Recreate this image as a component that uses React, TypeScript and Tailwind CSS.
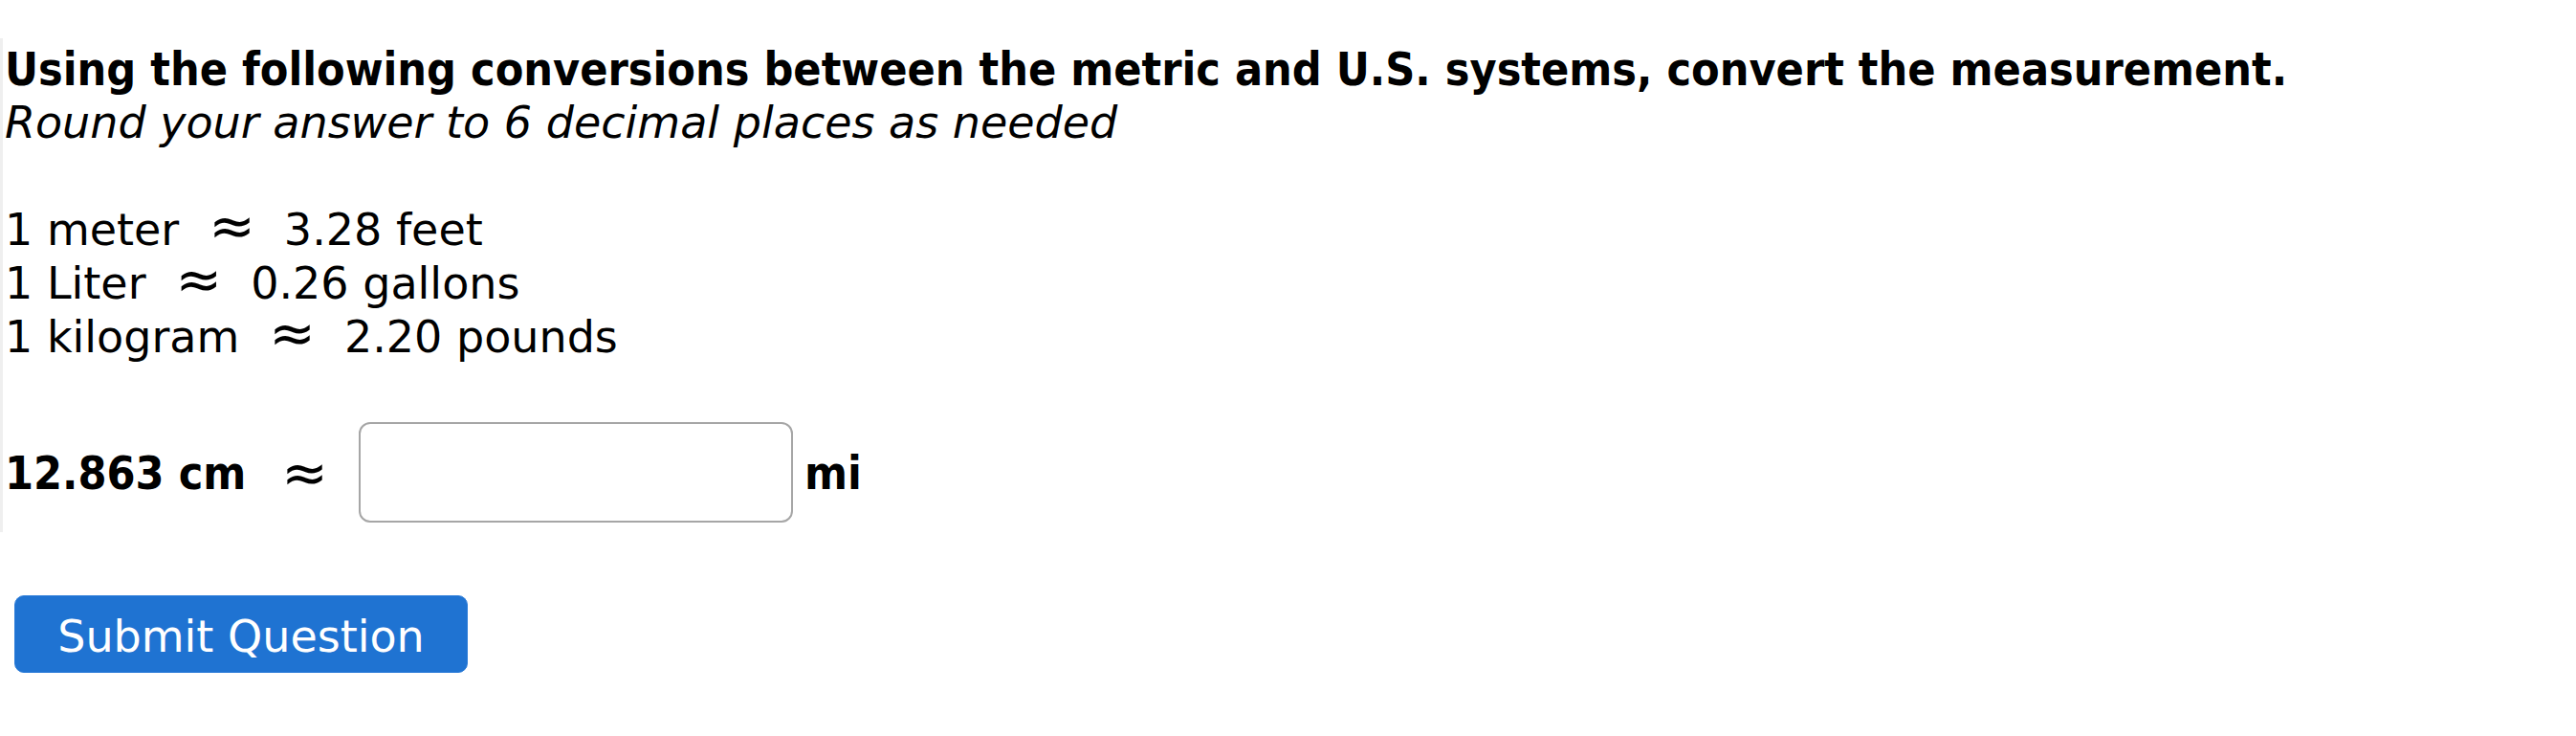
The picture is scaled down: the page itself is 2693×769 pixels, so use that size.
import React from "react";

const Approx = ({ ml, mr }: { ml: string; mr: string }) => (
  <span className={`inline-block text-[58px] leading-[40px] font-normal ${ml} ${mr}`}>≈</span>
);

export default function App() {
  return (
    <div className="min-h-[769px] w-full bg-white text-black font-['DejaVu_Sans',sans-serif] text-[46px] leading-[56px]">
      <div className="pt-[40px]">
        <div className="border-l-[3px] border-[#efefef] pl-[2px] pt-[4px] pb-[10px]">
          <p className="font-['DejaVu_Sans_Condensed','DejaVu_Sans',sans-serif] font-bold text-[48px] leading-[56px] whitespace-nowrap">
            Using the following conversions between the metric and U.S. systems, convert the measurement.
          </p>
          <p className="italic whitespace-nowrap">Round your answer to 6 decimal places as needed</p>

          <div className="mt-[56px]">
            <div className="h-[56px] whitespace-nowrap">
              <span>1 meter</span>
              <Approx ml="ml-[31px]" mr="mr-[30px]" />
              <span>3.28 feet</span>
            </div>
            <div className="h-[56px] whitespace-nowrap">
              <span>1 Liter</span>
              <Approx ml="ml-[31px]" mr="mr-[30px]" />
              <span>0.26 gallons</span>
            </div>
            <div className="h-[56px] whitespace-nowrap">
              <span>1 kilogram</span>
              <Approx ml="ml-[31px]" mr="mr-[30px]" />
              <span>2.20 pounds</span>
            </div>
          </div>

          <div className="mt-[61px] flex h-[105px] items-center whitespace-nowrap">
            <span className="font-['DejaVu_Sans_Condensed','DejaVu_Sans',sans-serif] font-bold text-[48px]">12.863 cm</span>
            <Approx ml="ml-[37px]" mr="mr-[32px]" />
            <input
              type="text"
              aria-label="answer"
              className="h-[105px] w-[454px] rounded-[12px] border-2 border-[#a6a6a6] bg-white px-3 outline-none"
            />
            <span className="ml-[12px] font-['DejaVu_Sans_Condensed','DejaVu_Sans',sans-serif] font-bold text-[48px]">mi</span>
          </div>
        </div>

        <button
          type="button"
          className="ml-[15px] mt-[66px] flex h-[81px] w-[474px] items-center justify-center rounded-[10px] border border-[#2a7bd8] bg-[#1f73d2] pt-[4px] text-[46px] leading-[56px] text-white"
        >
          Submit Question
        </button>
      </div>
    </div>
  );
}
